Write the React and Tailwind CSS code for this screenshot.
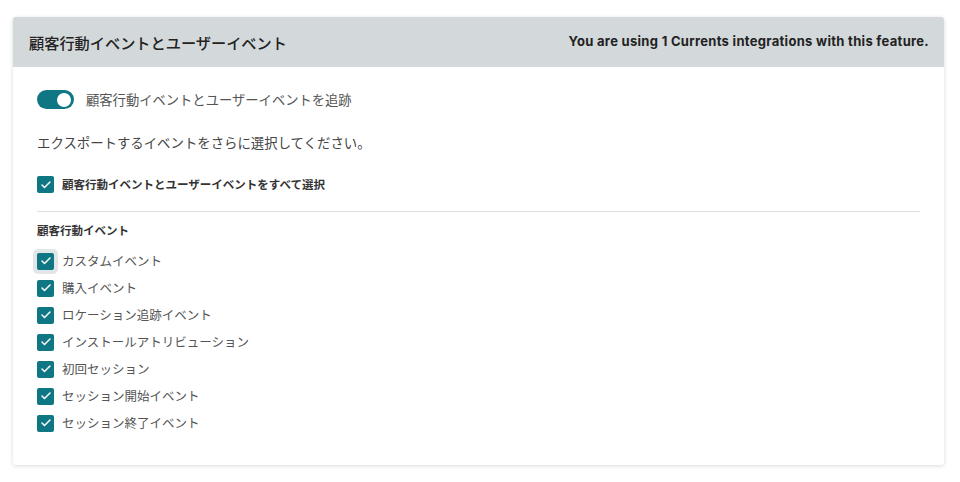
import { Check } from 'lucide-react';

const font = { fontFamily: '"Noto Sans CJK JP", "Noto Sans", sans-serif' };

const events = [
  'カスタムイベント',
  '購入イベント',
  'ロケーション追跡イベント',
  'インストールアトリビューション',
  '初回セッション',
  'セッション開始イベント',
  'セッション終了イベント',
];

function Box() {
  return (
    <span className="flex h-[17px] w-[17px] shrink-0 items-center justify-center rounded-[2px] bg-[#0f7683]">
      <Check className="h-[12px] w-[12px] text-white" strokeWidth={3} />
    </span>
  );
}

export default function App() {
  return (
    <div className="min-h-[482px] bg-white pt-[17px] pl-[13px] pr-[16px]" style={font}>
      <div className="h-[448px] rounded-[3px] bg-white shadow-[0_1px_4px_rgba(0,0,0,0.15)]">
        <div className="flex h-[50px] items-center justify-between rounded-t-[3px] bg-[#d3d8db] pl-[16px] pr-[15px]">
          <h2 className="text-[15.2px] font-medium text-[#222]">顧客行動イベントとユーザーイベント</h2>
          <p className="font-['Inter',sans-serif] text-[13px] font-bold tracking-[0.3px] text-[#222]">
            You are using 1 Currents integrations with this feature.
          </p>
        </div>

        <div className="px-[24px] pt-[23px]">
          <div className="flex items-center gap-[12px]">
            <span className="flex h-[19px] w-[37px] items-center justify-end rounded-full bg-[#0f7683] pr-[3px]">
              <span className="h-[14px] w-[14px] rounded-full bg-white" />
            </span>
            <span className="text-[13.3px] text-[#555]">顧客行動イベントとユーザーイベントを追跡</span>
          </div>

          <p className="mt-[22px] text-[13.4px] text-[#444]">エクスポートするイベントをさらに選択してください。</p>

          <div className="mt-[24px] flex items-center gap-[8px]">
            <Box />
            <span className="text-[11.5px] font-bold text-[#333]">顧客行動イベントとユーザーイベントをすべて選択</span>
          </div>

          <div className="mt-[18px] border-t border-[#dcdfe1]" />

          <h3 className="mt-[10px] text-[11.5px] font-bold text-[#333]">顧客行動イベント</h3>

          <ul className="mt-[8px] flex flex-col">
            {events.map((e, i) => (
              <li key={e} className="flex h-[27px] items-center gap-[8px]">
                <span
                  className={
                    i === 0
                      ? '-m-[4px] flex h-[25px] w-[25px] items-center justify-center rounded-[5px] bg-[#e3e6e8]'
                      : 'flex'
                  }
                >
                  <Box />
                </span>
                <span className="text-[12.5px] text-[#555]">{e}</span>
              </li>
            ))}
          </ul>
        </div>
      </div>
    </div>
  );
}
